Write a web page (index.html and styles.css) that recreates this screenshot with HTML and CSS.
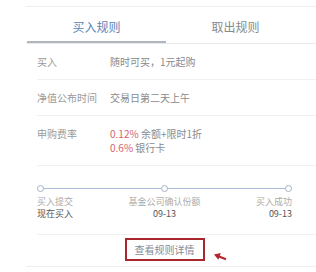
FILE: index.html
```html
<!DOCTYPE html>
<html lang="zh-CN">
<head>
  <meta charset="UTF-8" />
  <meta name="viewport" content="width=device-width, initial-scale=1.0"/>
  <title>买入规则</title>
  <link rel="stylesheet" href="styles.css">
</head>
<body>
  <div class="rules">
    <div class="tabs">
      <div class="tab active">买入规则</div>
      <div class="tab">取出规则</div>
    </div>

    <div class="rows">
      <div class="row">
        <span class="label">买入</span>
        <span class="value">随时可买，1元起购</span>
      </div>
      <div class="row">
        <span class="label">净值公布时间</span>
        <span class="value">交易日第二天上午</span>
      </div>
      <div class="row">
        <span class="label">申购费率</span>
        <span class="value">
          <span class="rate">0.12%</span> 余额+限时1折<br>
          <span class="rate">0.6%</span> 银行卡
        </span>
      </div>
    </div>

    <div class="timeline">
      <div class="track">
        <span class="dot"></span>
        <span class="dot"></span>
        <span class="dot"></span>
      </div>
      <div class="steps">
        <div class="step">
          <div class="step-name">买入提交</div>
          <div class="step-date">现在买入</div>
        </div>
        <div class="step center">
          <div class="step-name">基金公司确认份额</div>
          <div class="step-date">09-13</div>
        </div>
        <div class="step end">
          <div class="step-name">买入成功</div>
          <div class="step-date">09-13</div>
        </div>
      </div>
    </div>

    <div class="more">
      <a href="#" class="more-btn">查看规则详情
        <svg class="mark" width="14" height="11" viewBox="0 0 14 11">
          <polygon points="1,3.5 7.8,2 5.4,8.8" fill="#b3242c"/>
          <line x1="6" y1="5.5" x2="13" y2="8.2" stroke="#b3242c" stroke-width="2"/>
        </svg>
      </a>
    </div>
  </div>
</body>
</html>
```

FILE: styles.css
```css
* {
  margin: 0;
  padding: 0;
  box-sizing: border-box;
}

body {
  background-color: white;
  font-family: "Noto Sans CJK SC", "Noto Sans", sans-serif;
  color: #8c8c8c;
}

a {
  text-decoration: none;
}

.rules {
  margin: 6px 0 0 26px;
  border-top: 1px solid #efefef;
}

.tabs {
  display: flex;
  padding-left: 1px;
  border-bottom: 1px solid #e9e9e9;
}

.tab {
  flex: 0 0 139px;
  text-align: center;
  font-size: 12px;
  line-height: 14px;
  padding: 13px 0 9px 0;
  color: #8a8a8a;
}

.tab.active {
  color: #5a86b8;
  box-shadow: inset 0 -2px 0 #aeb6bf;
}

.rows {
  margin-left: 11px;
}

.row {
  display: flex;
  font-size: 10px;
  line-height: 14px;
  padding: 11px 0 10px 0;
  border-bottom: 1px solid #f1f1f1;
}

.label {
  flex: 0 0 73px;
  color: #9a9a9a;
}

.value {
  color: #8a8a8a;
}

.rate {
  color: #d4636b;
}

.timeline {
  margin-left: 11px;
  padding: 19px 24px 14px 0;
  border-bottom: 1px solid #f1f1f1;
}

.track {
  display: flex;
  justify-content: space-between;
  align-items: center;
  height: 7px;
  background: linear-gradient(#a9bdd6, #a9bdd6) center / 100% 1px no-repeat;
}

.dot {
  width: 7px;
  height: 7px;
  border: 1px solid #a3b2c4;
  border-radius: 50%;
  background-color: white;
}

.steps {
  display: flex;
  justify-content: space-between;
  margin-top: 4px;
  font-size: 9px;
  line-height: 12px;
}

.step.center {
  text-align: center;
}

.step.end {
  text-align: right;
}

.step-name {
  color: #ababab;
}

.step-date {
  color: #555;
}

.more {
  display: flex;
  justify-content: center;
  padding: 3px 24px 5px 11px;
  border-bottom: 1px solid #efefef;
}

.more-btn {
  position: relative;
  display: block;
  height: 23px;
  padding: 0 8px;
  border: 2px solid #a8262c;
  font-size: 10px;
  line-height: 19px;
  color: #7f8b99;
}

.mark {
  position: absolute;
  left: 86px;
  top: 11px;
}
```
